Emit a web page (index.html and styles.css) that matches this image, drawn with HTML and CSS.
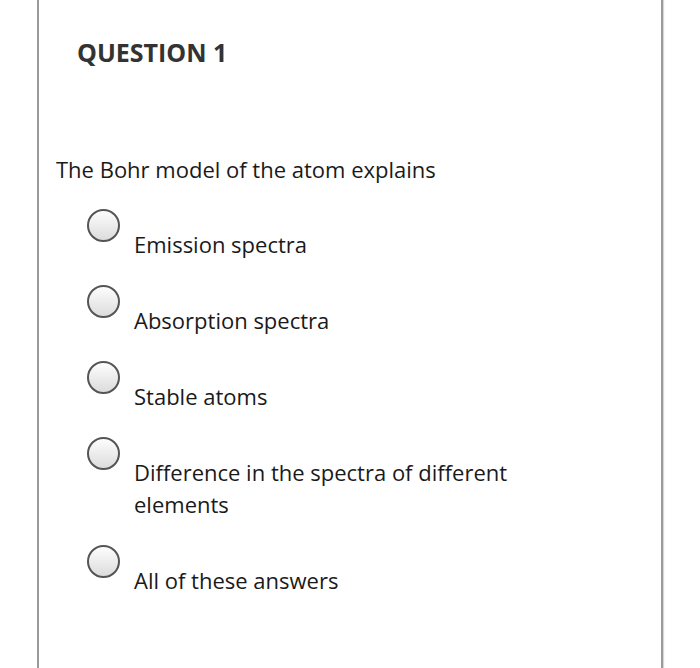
FILE: index.html
```html
<!DOCTYPE html>
<html>
<head>
<meta charset="utf-8">
<link rel="stylesheet" href="styles.css">
</head>
<body>
<div class="page">
  <h1 class="title">QUESTION 1</h1>
  <p class="question">The Bohr model of the atom explains</p>
  <ul class="options">
    <li class="option"><span class="radio"></span><span class="label">Emission spectra</span></li>
    <li class="option"><span class="radio"></span><span class="label">Absorption spectra</span></li>
    <li class="option"><span class="radio"></span><span class="label">Stable atoms</span></li>
    <li class="option"><span class="radio"></span><span class="label">Difference in the spectra of different<br>elements</span></li>
    <li class="option"><span class="radio"></span><span class="label">All of these answers</span></li>
  </ul>
</div>
</body>
</html>
```
FILE: styles.css
```css
html, body {
  margin: 0;
  padding: 0;
  background: #fff;
}
body {
  font-family: "Open Sans", "Liberation Sans", sans-serif;
  color: #1a1a1a;
}
.page {
  margin-left: 37px;
  width: 622px;
  height: 668px;
  border-left: 2px solid #9a9a9a;
  border-right: 2px solid #9a9a9a;
  box-shadow: 1px 0 1px #d8d8d8;
  box-sizing: content-box;
}
.title {
  margin: 0;
  padding: 36px 0 0 38px;
  font-size: 25px;
  line-height: 32px;
  font-weight: 700;
  color: #333;
}
.question {
  margin: 85px 0 0 17px;
  font-size: 22px;
  line-height: 32px;
}
.options {
  list-style: none;
  margin: 24px 0 0 48px;
  padding: 0;
}
.option {
  display: flex;
  align-items: flex-start;
  gap: 14px;
  padding-bottom: 25px;
}
.radio {
  flex: none;
  width: 29px;
  height: 29px;
  border: 2px solid #555;
  border-radius: 50%;
  background: linear-gradient(#fdfdfd, #dcdcdc);
}
.label {
  margin-top: 19px;
  font-size: 22px;
  line-height: 32px;
}
```
